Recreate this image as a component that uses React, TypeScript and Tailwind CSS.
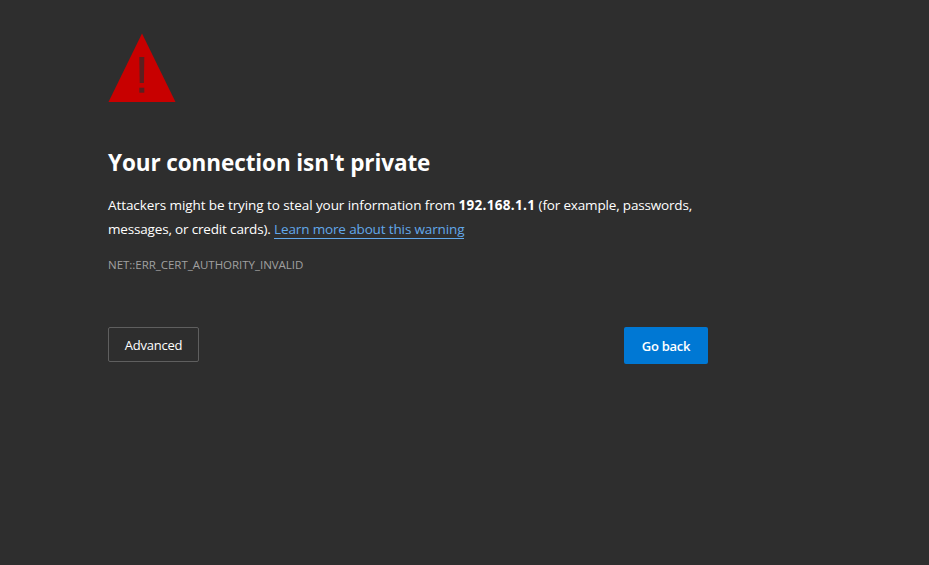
export default function App() {
  return (
    <main className="min-h-screen bg-[#2e2e2e] text-white font-['Open_Sans','Noto_Sans',sans-serif]">
      <div className="w-[600px] ml-[108px] pt-[33px]">
        <svg width="68" height="69" viewBox="0 0 68 69" className="block">
          <path d="M34 0.5 L67.5 69 L0.5 69 Z" fill="#c80000" />
          <path d="M31.3 24 H36.3 L35.9 50 H31.7 Z" fill="#5c1f1f" />
          <rect x="31.3" y="54.7" width="5" height="5" fill="#5c1f1f" />
        </svg>

        <h1 className="mt-[44px] text-[22.5px] leading-[34px] font-bold tracking-[-0.1px]">Your connection isn't private</h1>

        <p className="mt-[13px] text-[13.5px] leading-[24px] tracking-[-0.08px]">
          Attackers might be trying to steal your information from <b className="font-bold tracking-[0.3px]">192.168.1.1</b>{' '}
          <span className="tracking-[-0.17px]">(for example, passwords, messages, or credit cards).</span>{' '}
          <a className="text-[#62a8ea] border-b border-[#62a8ea] tracking-[-0.14px]">Learn more about this warning</a>
        </p>

        <p className="mt-[16px] text-[11.5px] leading-[16px] tracking-[-0.03px] text-[#a0a0a0]">NET::ERR_CERT_AUTHORITY_INVALID</p>

        <div className="mt-[54px] flex items-start justify-between">
          <button className="w-[91px] h-[35px] pt-[2px] rounded-[2px] border border-[#5f5f5f] text-[13px] tracking-[-0.26px] text-white">Advanced</button>
          <button className="w-[84px] h-[37px] pt-[2px] rounded-[2px] bg-[#0078d4] text-[13px] font-semibold tracking-[-0.26px] text-white">Go back</button>
        </div>
      </div>
    </main>
  )
}
